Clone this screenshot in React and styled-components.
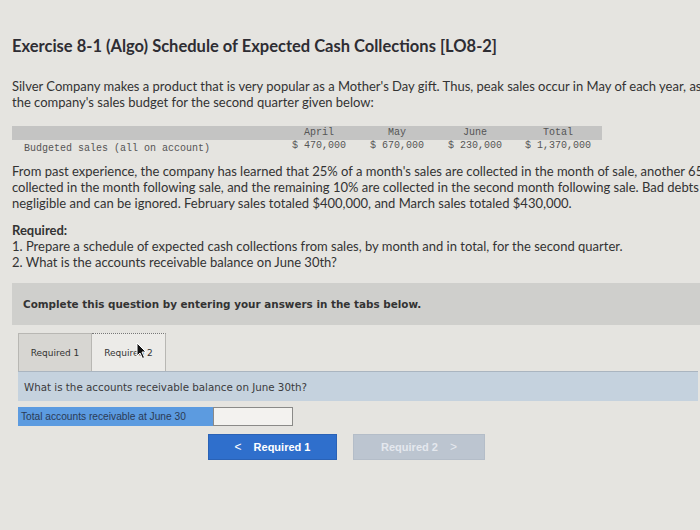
import React from "react";
import styled, { createGlobalStyle } from "styled-components";

const Global = createGlobalStyle`
  html, body { margin: 0; padding: 0; background: #e5e4e0; overflow: hidden; }
  body { width: 700px; height: 530px; }
`;

const Page = styled.div`
  width: 700px;
  height: 530px;
  overflow: hidden;
  background: #e5e4e0;
  padding-left: 12px;
  box-sizing: border-box;
  color: #2b2b2e;
  font-family: Lato, "Liberation Sans", sans-serif;
`;

const Title = styled.h1`
  margin: 0;
  padding-top: 35px;
  font-size: 16.5px;
  line-height: 22px;
  font-weight: 700;
  color: #2e2d33;
  white-space: nowrap;
`;

const Para = styled.p`
  margin: ${(p) => p.$mt || 0}px 0 0;
  font-size: 13px;
  line-height: 16px;
  white-space: nowrap;
  color: #333;
`;

const Line = styled.span`
  display: block;
`;

const Table = styled.div`
  margin-top: 16px;
  width: 590px;
  font-family: "Liberation Mono", monospace;
  font-size: 10px;
  color: #555;
`;

const Row = styled.div`
  display: grid;
  grid-template-columns: 268px 78px 78px 78px 88px;
  background: ${(p) => (p.$head ? "#c4c4c3" : "transparent")};
  height: ${(p) => (p.$head ? "14px" : "auto")};
  line-height: ${(p) => (p.$head ? "14px" : "12px")};
`;

const Cell = styled.div`
  text-align: ${(p) => (p.$label ? "left" : "center")};
  padding-left: ${(p) => (p.$label ? "12px" : "0")};
  padding-top: ${(p) => (p.$label ? "3px" : "0")};
  white-space: nowrap;
`;

const Bold = styled.span`
  font-weight: 700;
  display: block;
`;

const Prompt = styled.div`
  margin-top: 13px;
  height: 42px;
  background: #cfcfcc;
  display: flex;
  align-items: center;
  padding-left: 11px;
  font-family: "DejaVu Sans", Verdana, sans-serif;
  font-weight: 700;
  font-size: 10.4px;
  color: #333;
`;

const Tabs = styled.div`
  display: flex;
  margin-top: 8px;
  margin-left: 6px;
`;

const Tab = styled.div`
  width: 74px;
  height: 38px;
  box-sizing: border-box;
  display: flex;
  align-items: center;
  justify-content: center;
  font-family: "DejaVu Sans", Verdana, sans-serif;
  font-size: 9px;
  color: #333;
  background: ${(p) => (p.$active ? "#ecebe8" : "#d7d6d2")};
  border: 1px solid #b8b7b3;
  border-bottom: none;
  border-top: ${(p) => (p.$active ? "1px dotted #777" : "1px solid #b8b7b3")};
  border-left: ${(p) => (p.$active ? "none" : "1px solid #b8b7b3")};
  position: relative;
`;

const Cursor = styled.svg`
  position: absolute;
  left: 44px;
  top: 8px;
`;

const QuestionBar = styled.div`
  margin-left: 6px;
  width: 680px;
  height: 30px;
  box-sizing: border-box;
  background: #c5d2de;
  border-top: 1px solid #aab5c0;
  display: flex;
  align-items: center;
  padding-left: 6px;
  font-family: "DejaVu Sans", Verdana, sans-serif;
  font-size: 10.3px;
  color: #3a3a3c;
`;

const AnswerRow = styled.div`
  display: flex;
  margin-left: 6px;
  margin-top: 6px;
  height: 19px;
`;

const AnswerLabel = styled.div`
  width: 195px;
  background: #5c9be0;
  font-family: "Liberation Sans", Arial, sans-serif;
  font-size: 10.2px;
  color: #2a3a55;
  display: flex;
  align-items: center;
  padding-left: 3px;
  box-sizing: border-box;
  white-space: nowrap;
`;

const AnswerInput = styled.div`
  width: 80px;
  background: #f3f2ef;
  border: 1px solid #8a8a88;
  box-sizing: border-box;
`;

const Nav = styled.div`
  display: flex;
  gap: 16px;
  margin-top: 8px;
  margin-left: 196px;
`;

const NavButton = styled.div`
  width: ${(p) => p.$w}px;
  height: 26px;
  box-sizing: border-box;
  display: flex;
  align-items: center;
  justify-content: center;
  gap: 12px;
  font-family: "Liberation Sans", Arial, sans-serif;
  font-weight: 700;
  font-size: 11px;
  color: ${(p) => (p.$disabled ? "#e4e8ee" : "#ffffff")};
  background: ${(p) => (p.$disabled ? "#bcc5d0" : "#2f6fcc")};
  border: 1px solid ${(p) => (p.$disabled ? "#b4bdc8" : "#2a62b6")};
`;

const Chevron = styled.span`
  font-weight: 400;
  font-size: 12px;
`;

export default function App() {
  return (
    <>
      <Global />
      <Page>
        <Title>Exercise 8-1 (Algo) Schedule of Expected Cash Collections [LO8-2]</Title>
        <Para $mt={21}>
          <Line>Silver Company makes a product that is very popular as a Mother's Day gift. Thus, peak sales occur in May of each year, as shown in</Line>
          <Line>the company's sales budget for the second quarter given below:</Line>
        </Para>
        <Table>
          <Row $head>
            <Cell $label></Cell>
            <Cell>April</Cell>
            <Cell>May</Cell>
            <Cell>June</Cell>
            <Cell>Total</Cell>
          </Row>
          <Row>
            <Cell $label>Budgeted sales (all on account)</Cell>
            <Cell>$ 470,000</Cell>
            <Cell>$ 670,000</Cell>
            <Cell>$ 230,000</Cell>
            <Cell>$ 1,370,000</Cell>
          </Row>
        </Table>
        <Para $mt={8}>
          <Line>From past experience, the company has learned that 25% of a month's sales are collected in the month of sale, another 65% are</Line>
          <Line>collected in the month following sale, and the remaining 10% are collected in the second month following sale. Bad debts are</Line>
          <Line>negligible and can be ignored. February sales totaled $400,000, and March sales totaled $430,000.</Line>
        </Para>
        <Para $mt={11}>
          <Bold>Required:</Bold>
          <Line>1. Prepare a schedule of expected cash collections from sales, by month and in total, for the second quarter.</Line>
          <Line>2. What is the accounts receivable balance on June 30th?</Line>
        </Para>
        <Prompt>Complete this question by entering your answers in the tabs below.</Prompt>
        <Tabs>
          <Tab>Required 1</Tab>
          <Tab $active>
            Required 2
            <Cursor width="12" height="18" viewBox="0 0 12 18">
              <path d="M1 1 L1 14 L4 11 L6.5 16.5 L8.5 15.5 L6 10 L10 10 Z" fill="#111" stroke="#fff" strokeWidth="1" />
            </Cursor>
          </Tab>
        </Tabs>
        <QuestionBar>What is the accounts receivable balance on June 30th?</QuestionBar>
        <AnswerRow>
          <AnswerLabel>Total accounts receivable at June 30</AnswerLabel>
          <AnswerInput />
        </AnswerRow>
        <Nav>
          <NavButton $w={129}>
            <Chevron>&lt;</Chevron>
            <span>Required 1</span>
          </NavButton>
          <NavButton $w={132} $disabled>
            <span>Required 2</span>
            <Chevron>&gt;</Chevron>
          </NavButton>
        </Nav>
      </Page>
    </>
  );
}
